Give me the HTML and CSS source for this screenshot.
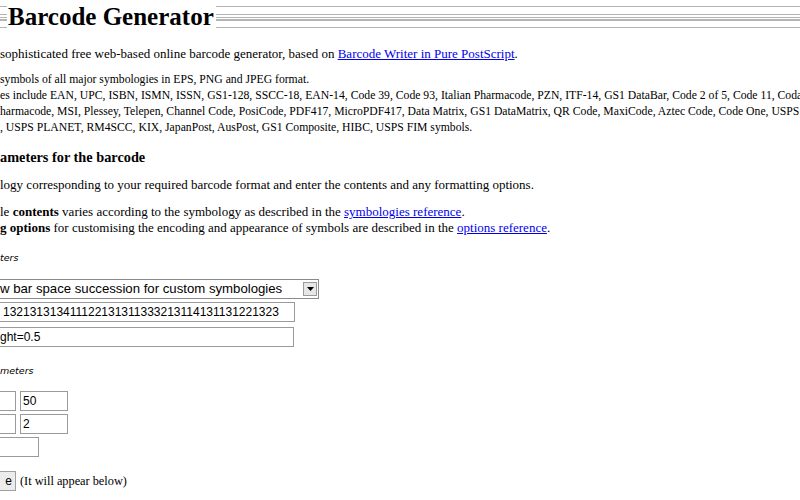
FILE: index.html
```html
<!DOCTYPE html>
<html>
<head>
<meta charset="utf-8">
<link rel="stylesheet" href="styles.css">
</head>
<body>
<div class="titlebar"><h1 class="title">Barcode Generator</h1></div>
<p class="intro">sophisticated free web-based online barcode generator, based on <a href="#">Barcode Writer in Pure PostScript</a>.</p>
<p class="features">symbols of all major symbologies in EPS, PNG and JPEG format.<br>es include EAN, UPC, ISBN, ISMN, ISSN, GS1-128, SSCC-18, EAN-14, Code 39, Code 93, Italian Pharmacode, PZN, ITF-14, GS1 DataBar, Code 2 of 5, Code 11, Codabar<br>harmacode, MSI, Plessey, Telepen, Channel Code, PosiCode, PDF417, MicroPDF417, Data Matrix, GS1 DataMatrix, QR Code, MaxiCode, Aztec Code, Code One, USPS<br>, USPS PLANET, RM4SCC, KIX, JapanPost, AusPost, GS1 Composite, HIBC, USPS FIM symbols.</p>
<h3 class="heading">ameters for the barcode</h3>
<p class="text">logy corresponding to your required barcode format and enter the contents and any formatting options.</p>
<p class="text">le <b>contents</b> varies according to the symbology as described in the <a href="#">symbologies reference</a>.<br><b>g options</b> for customising the encoding and appearance of symbols are described in the <a href="#">options reference</a>.</p>
<form class="form">
  <div class="legend">ters</div>
  <div class="select"><span class="select-text">w bar space succession for custom symbologies</span><span class="select-btn"><svg width="7" height="4" viewBox="0 0 7 4"><path d="M0 0H7L3.5 4Z" fill="#000"/></svg></span></div>
  <input class="field field-data" type="text" value="132131313411122131311333213114131131221323">
  <input class="field field-opts" type="text" value="ght=0.5">
  <div class="legend legend2">meters</div>
  <div class="row"><input class="field cut" type="text" value=""><input class="field small" type="text" value="50"></div>
  <div class="row"><input class="field cut" type="text" value=""><input class="field small" type="text" value="2"></div>
  <div class="row"><input class="field cut wide" type="text" value=""></div>
  <div class="submit-row"><button class="btn" type="button">e</button><span class="note">(It will appear below)</span></div>
</form>
</body>
</html>
```
FILE: styles.css
```css
html, body {
  margin: 0;
  padding: 0;
  background: #fff;
}
body {
  font-family: "Liberation Serif", "Times New Roman", serif;
  font-size: 13px;
  line-height: 16px;
  color: #000;
  overflow: hidden;
  white-space: nowrap;
  width: 800px;
  height: 500px;
}
a { color: #0000ee; }
.titlebar {
  height: 34px;
  padding-left: 7px;
  background:
    linear-gradient(#b4b4b4, #b4b4b4) 0 6px / 100% 1px no-repeat,
    linear-gradient(#b4b4b4, #b4b4b4) 0 14px / 100% 1px no-repeat,
    linear-gradient(#b4b4b4, #b4b4b4) 0 17px / 100% 1px no-repeat,
    linear-gradient(#b4b4b4, #b4b4b4) 0 19px / 100% 2px no-repeat,
    linear-gradient(#b4b4b4, #b4b4b4) 0 27px / 100% 1px no-repeat;
}
.title {
  display: inline-block;
  margin: 0;
  padding: 0 2px 0 1px;
  background: #fff;
  font-size: 25px;
  line-height: 34px;
  height: 29px;
  overflow: hidden;
  font-weight: bold;
}
.intro { margin: 12px 0 0; }
.features {
  margin: 10px 0 0;
  font-size: 11.7px;
}
.heading {
  margin: 12px 0 0;
  font-size: 14.3px;
  line-height: 18px;
  font-weight: bold;
}
.text { margin: 11px 0 0; }
.form { margin: 0; }
.legend {
  margin-top: 14px;
  font-family: "DejaVu Sans", sans-serif;
  font-style: italic;
  font-size: 9.5px;
  line-height: 16px;
}
.select {
  margin-top: 13px;
  width: 318px;
  height: 18px;
  border: 1px solid #8a8a8a;
  border-left: 0;
  display: flex;
  align-items: center;
  justify-content: space-between;
  font-family: "Liberation Sans", Arial, sans-serif;
  font-size: 13.2px;
}
.select-btn {
  width: 14px;
  height: 14px;
  margin-right: 1px;
  background: #e6e6e6;
  border: 1px solid #9a9a9a;
  box-sizing: border-box;
  display: flex;
  align-items: center;
  justify-content: center;
}
.field {
  display: block;
  box-sizing: border-box;
  height: 20px;
  margin: 0;
  border: 1px solid #9a9a9a;
  font-family: "Liberation Sans", Arial, sans-serif;
  font-size: 12px;
  color: #000;
  padding: 0 2px;
  outline: none;
  background: #fff;
}
.field-data {
  margin-top: 3px;
  width: 295px;
  border-left: 0;
  padding-left: 3px;
}
.field-opts {
  margin-top: 5px;
  width: 294px;
  border-left: 0;
  padding-left: 0;
}
.legend2 { margin-top: 16px; }
.row {
  display: flex;
  gap: 4px;
  margin-top: 3px;
}
.legend2 + .row { margin-top: 12px; }
.cut {
  width: 16px;
  border-left: 0;
}
.wide { width: 39px; }
.small {
  width: 48px;
  padding-left: 2px;
}
.submit-row {
  margin-top: 14px;
  display: flex;
  align-items: center;
  gap: 4px;
}
.btn {
  box-sizing: border-box;
  width: 16px;
  height: 20px;
  margin: 0;
  padding: 0 3px 0 0;
  text-align: right;
  background: #ececec;
  border: 1px solid #a0a0a0;
  border-left: 0;
  font-family: "Liberation Sans", Arial, sans-serif;
  font-size: 12px;
  color: #000;
}
.note {
  line-height: 16px;
  font-size: 12.3px;
}
```
